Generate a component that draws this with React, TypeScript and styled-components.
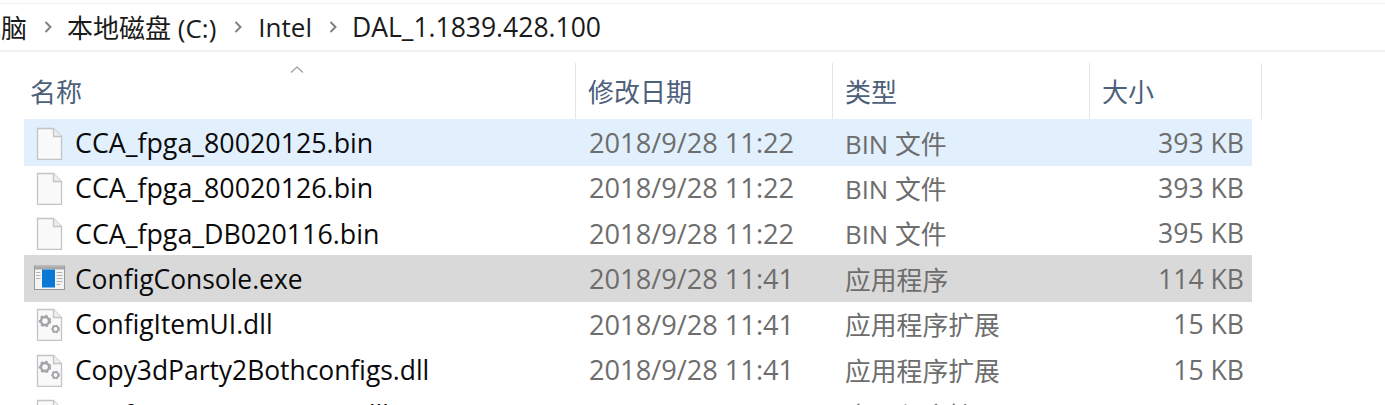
import styled, { createGlobalStyle } from "styled-components";

const GlobalStyle = createGlobalStyle`
  html, body {
    margin: 0;
    height: 100%;
    background: #fff;
    overflow: hidden;
  }
  body {
    font-family: "Open Sans", "Noto Sans CJK SC", sans-serif;
  }
`;

const Window = styled.div`
  width: 1385px;
  height: 405px;
  overflow: hidden;
`;

const AddressBar = styled.div`
  box-sizing: border-box;
  height: 49px;
  margin-top: 3px;
  border-top: 1px solid #f0f0f0;
  border-bottom: 2px solid #f0f0f0;
  display: flex;
  align-items: center;
  overflow: hidden;
  font-size: 26px;
  color: #1a1a1a;
`;

const Crumb = styled.span<{ $gap: number }>`
  margin-right: ${({ $gap }) => $gap}px;
  white-space: nowrap;
`;

const CutCrumb = styled(Crumb)`
  margin-left: -25px;
`;

const LastCrumb = styled(Crumb)`
  font-size: 26.500px;
`;

const ChevronSvg = styled.svg<{ $after?: number }>`
  width: 10px;
  height: 14px;
  margin-right: ${({ $after }) => $after ?? 14}px;
  flex: none;
`;

const Chevron = ({ after }: { after?: number }) => (
  <ChevronSvg viewBox="0 0 10 14" $after={after}>
    <path d="M2.500 2 7.500 7l-5 5" fill="none" stroke="#808080" strokeWidth="2" />
  </ChevronSvg>
);

const Header = styled.div`
  height: 56px;
  margin-top: 11px;
  display: grid;
  grid-template-columns: 576px 257px 257px 172px;
  position: relative;
`;

const HeaderCell = styled.div<{ $left: number }>`
  border-right: 1px solid #e5e5e5;
  padding-left: ${({ $left }) => $left}px;
  padding-top: 11px;
  font-size: 26px;
  line-height: 36px;
  color: #4c607a;
  box-sizing: border-box;
`;

const SortCaret = styled.svg`
  position: absolute;
  left: 289px;
  top: 2px;
  width: 16px;
  height: 9px;
`;

const List = styled.div`
  margin-left: 24px;
  width: 1228px;
`;

const Row = styled.div<{ $bg?: string }>`
  height: 47px;
  margin-bottom: -1.600px;
  display: grid;
  grid-template-columns: 551px 257px 257px 163px;
  align-items: center;
  background: ${({ $bg }) => $bg ?? "transparent"};
  white-space: nowrap;
`;

const NameCell = styled.div<{ $size: number }>`
  display: flex;
  align-items: center;
  font-size: ${({ $size }) => $size}px;
  color: #0a0a0a;
`;

const IconSlot = styled.svg`
  width: 32px;
  height: 34px;
  margin-left: 9px;
  margin-right: 10px;
  flex: none;
`;

const ExeIcon = styled(IconSlot)`
  width: 34px;
  margin-right: 8px;
`;

const InfoCell = styled.div<{ $size: number; $left?: number }>`
  padding-left: ${({ $left }) => $left ?? 14}px;
  font-size: ${({ $size }) => $size}px;
  color: #6d6d6d;
`;

const SizeCell = styled(InfoCell)`
  text-align: right;
  padding-right: 8px;
`;

const PageShape = ({ children }: { children?: React.ReactNode }) => (
  <IconSlot viewBox="0 0 32 34">
    <path d="M4.500 2.500h16l8 8v23h-24z" fill="#f9f9f9" stroke="#c4c4c4" strokeWidth="1.300" />
    <path d="M20.500 2.500v8h8" fill="#eee" stroke="#c4c4c4" strokeWidth="1.300" />
    {children}
  </IconSlot>
);

const Gear = ({ x, y, r }: { x: number; y: number; r: number }) => (
  <g>
    <circle cx={x} cy={y} r={r} fill="none" stroke="#a0a5aa" strokeWidth={r * 0.6} />
    <circle cx={x} cy={y} r={r * 1.35} fill="none" stroke="#a0a5aa" strokeWidth={r * 0.4} strokeDasharray={`${r * 0.65} ${r * 0.6}`} />
  </g>
);

const AppIcon = () => (
  <ExeIcon viewBox="0 0 34 34">
    <rect x="1.500" y="4" width="30" height="23.500" fill="#f4f4f4" stroke="#9a9a9a" strokeWidth="1" />
    <rect x="2" y="4.500" width="29" height="3" fill="#a8a8a8" />
    <rect x="9" y="7.500" width="13" height="18" fill="#0a78d7" />
    <path d="M23.500 10.500h6M23.500 13.500h6M23.500 16.500h6M23.500 19.500h6M23.500 22.500h4M3 10.500h4.500M3 13.500h4.500M3 16.500h4.500" stroke="#b5b5b5" strokeWidth="1.200" />
  </ExeIcon>
);

type FileRow = {
  name: string;
  date: string;
  type: string;
  size: string;
  kind: "page" | "exe" | "dll";
  bg?: string;
};

const files: FileRow[] = [
  { name: "CCA_fpga_80020125.bin", date: "2018/9/28 11:22", type: "BIN 文件", size: "393 KB", kind: "page", bg: "#e1f0fc" },
  { name: "CCA_fpga_80020126.bin", date: "2018/9/28 11:22", type: "BIN 文件", size: "393 KB", kind: "page" },
  { name: "CCA_fpga_DB020116.bin", date: "2018/9/28 11:22", type: "BIN 文件", size: "395 KB", kind: "page" },
  { name: "ConfigConsole.exe", date: "2018/9/28 11:41", type: "应用程序", size: "114 KB", kind: "exe", bg: "#d9d9d9" },
  { name: "ConfigItemUI.dll", date: "2018/9/28 11:41", type: "应用程序扩展", size: "15 KB", kind: "dll" },
  { name: "Copy3dParty2Bothconfigs.dll", date: "2018/9/28 11:41", type: "应用程序扩展", size: "15 KB", kind: "dll" },
  { name: "ConfigurationManager.dll", date: "2018/9/28 11:41", type: "应用程序扩展", size: "15 KB", kind: "dll" },
];

const FileIcon = ({ kind }: { kind: FileRow["kind"] }) => {
  if (kind === "exe") return <AppIcon />;
  if (kind === "dll") {
    return (
      <PageShape>
        <Gear x={12} y={14} r={4} />
        <Gear x={22.500} y={22} r={2.800} />
      </PageShape>
    );
  }
  return <PageShape />;
};

export default function App() {
  return (
    <Window>
      <GlobalStyle />
      <AddressBar>
        <CutCrumb $gap={16}>电脑</CutCrumb>
        <Chevron />
        <Crumb $gap={17}>本地磁盘 (C:)</Crumb>
        <Chevron after={15} />
        <Crumb $gap={16}>Intel</Crumb>
        <Chevron />
        <LastCrumb $gap={0}>DAL_1.1839.428.100</LastCrumb>
      </AddressBar>
      <Header>
        <HeaderCell $left={12}>
          <NameHeading>名称</NameHeading>
        </HeaderCell>
        <HeaderCell $left={12}>修改日期</HeaderCell>
        <HeaderCell $left={12}>类型</HeaderCell>
        <HeaderCell $left={12}>大小</HeaderCell>
        <SortCaret viewBox="0 0 16 9">
          <path d="M2 7.500 8 2l6 5.500" fill="none" stroke="#9a9a9a" strokeWidth="1.200" />
        </SortCaret>
      </Header>
      <List>
        {files.map((file) => (
          <Row key={file.name} $bg={file.bg}>
            <NameCell $size={file.kind === "page" ? 26.8 : 26.4}>
              <FileIcon kind={file.kind} />
              {file.name}
            </NameCell>
            <InfoCell $size={27.2}>{file.date}</InfoCell>
            <InfoCell $size={25.8} $left={13}>{file.type}</InfoCell>
            <SizeCell $size={26.6}>{file.size}</SizeCell>
          </Row>
        ))}
      </List>
    </Window>
  );
}

const NameHeading = styled.span`
  margin-left: 18px;
`;
